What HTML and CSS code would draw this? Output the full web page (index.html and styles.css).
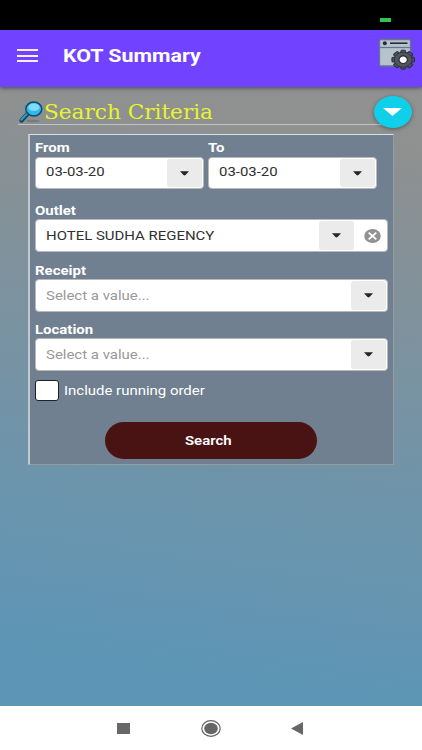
FILE: index.html
```
<!DOCTYPE html>
<html lang="en">
<head>
  <meta charset="UTF-8" />
  <meta name="viewport" content="width=device-width, initial-scale=1.0"/>
  <title>KOT Summary</title>
  <link rel="stylesheet" href="styles.css">
</head>
<body>
  <!-- Status bar -->
  <div class="status-bar"><div class="battery"></div></div>

  <!-- App header -->
  <header class="app-header">
    <button class="menu-btn" aria-label="Menu">
      <span class="bar"></span>
      <span class="bar"></span>
      <span class="bar"></span>
    </button>
    <h1><span class="wide">KOT Summary</span></h1>
    <svg class="settings-icon" width="38" height="32" viewBox="0 0 38 32">
      <rect x="1.5" y="1.5" width="31" height="26.5" rx="1.5" fill="#b5c3cc" stroke="#66758a" stroke-width="1.3"/>
      <path d="M2 9.5H32" stroke="#66758a" stroke-width="1.2"/>
      <circle cx="6.8" cy="5.2" r="2" fill="#262c3b"/>
      <path d="M12 5.2H29.5" stroke="#262c3b" stroke-width="1.6"/>
      <g transform="translate(25.2 21.7)">
        <g fill="#50555f" stroke="#2b303c" stroke-width="1">
          <rect x="-2.4" y="-9.5" width="4.8" height="19" rx="1"/>
          <rect x="-2.4" y="-9.5" width="4.8" height="19" rx="1" transform="scale(1.18 1) rotate(45)"/>
          <rect x="-2.4" y="-9.5" width="4.8" height="19" rx="1" transform="scale(1.18 1) rotate(90)"/>
          <rect x="-2.4" y="-9.5" width="4.8" height="19" rx="1" transform="scale(1.18 1) rotate(135)"/>
          <ellipse rx="8.8" ry="7.5"/>
        </g>
        <ellipse rx="8.3" ry="7" fill="#50555f"/>
        <ellipse rx="4.2" ry="3.8" fill="#fff" stroke="#252a36" stroke-width="1.2"/>
      </g>
    </svg>
  </header>

  <main class="page">
    <div class="section-title">
      <svg class="search-icon" width="26" height="23" viewBox="0 0 26 23">
        <ellipse cx="15" cy="20" rx="7" ry="1.3" fill="#555" opacity=".35"/>
        <path d="M9.5 13L3.5 19.5" stroke="#10465f" stroke-width="4.4" stroke-linecap="round"/>
        <path d="M8.8 13L3.3 18.7" stroke="#269fd0" stroke-width="2" stroke-linecap="round"/>
        <ellipse cx="15.8" cy="8" rx="8" ry="6.9" fill="#31b8ea" stroke="#124c67" stroke-width="1.5"/>
        <ellipse cx="16" cy="6.3" rx="5.5" ry="3.8" fill="#9be7fb" opacity=".75"/>
      </svg>
      <h2><span class="wide">Search Criteria</span></h2>
      <button class="collapse-btn" aria-label="Collapse">
        <svg width="19" height="8" viewBox="0 0 19 8"><path d="M0 0H19L9.5 8Z" fill="#fff"/></svg>
      </button>
    </div>

    <form class="criteria">
      <div class="row">
        <div class="field">
          <label><span class="wide">From</span></label>
          <div class="combo combo-date">
            <span class="value"><span class="wide">03-03-20</span></span>
            <span class="trigger"><svg width="9" height="5" viewBox="0 0 9 5"><path d="M0 .3H9L5.5 4Q4.5 4.8 3.5 4Z"/></svg></span>
          </div>
        </div>
        <div class="field">
          <label><span class="wide">To</span></label>
          <div class="combo combo-date">
            <span class="value"><span class="wide">03-03-20</span></span>
            <span class="trigger"><svg width="9" height="5" viewBox="0 0 9 5"><path d="M0 .3H9L5.5 4Q4.5 4.8 3.5 4Z"/></svg></span>
          </div>
        </div>
      </div>

      <div class="field">
        <label><span class="wide">Outlet</span></label>
        <div class="combo">
          <span class="value"><span class="wide">HOTEL SUDHA REGENCY</span></span>
          <span class="trigger"><svg width="9" height="5" viewBox="0 0 9 5"><path d="M0 .3H9L5.5 4Q4.5 4.8 3.5 4Z"/></svg></span>
          <span class="clear">
            <svg width="17" height="14" viewBox="0 0 17 14">
              <ellipse cx="8.5" cy="7" rx="8.3" ry="7" fill="#929292"/>
              <path d="M4.7 3.6L12.3 10.4M12.3 3.6L4.7 10.4" stroke="#fff" stroke-width="1.8"/>
            </svg>
          </span>
        </div>
      </div>

      <div class="field">
        <label><span class="wide">Receipt</span></label>
        <div class="combo">
          <span class="value placeholder"><span class="wide">Select a value...</span></span>
          <span class="trigger"><svg width="9" height="5" viewBox="0 0 9 5"><path d="M0 .3H9L5.5 4Q4.5 4.8 3.5 4Z"/></svg></span>
        </div>
      </div>

      <div class="field">
        <label><span class="wide">Location</span></label>
        <div class="combo">
          <span class="value placeholder"><span class="wide">Select a value...</span></span>
          <span class="trigger"><svg width="9" height="5" viewBox="0 0 9 5"><path d="M0 .3H9L5.5 4Q4.5 4.8 3.5 4Z"/></svg></span>
        </div>
      </div>

      <div class="check-row">
        <span class="checkbox"></span>
        <span class="wide">Include running order</span>
      </div>

      <button type="button" class="search-btn"><span class="wide">Search</span></button>
    </form>
  </main>

  <!-- Android navigation -->
  <nav class="nav-bar">
    <svg width="13" height="11" viewBox="0 0 13 11"><rect width="13" height="11" fill="#686868"/></svg>
    <svg width="20" height="17" viewBox="0 0 20 17">
      <ellipse cx="10" cy="8.5" rx="9.2" ry="7.8" fill="none" stroke="#666" stroke-width="1.2"/>
      <ellipse cx="10" cy="8.5" rx="6.8" ry="5.8" fill="#666"/>
    </svg>
    <svg width="12" height="13" viewBox="0 0 12 13"><path d="M12 0V13L0 6.5Z" fill="#666"/></svg>
  </nav>
</body>
</html>
```
FILE: styles.css
```
:root {
  --header-color: #7142ff;
  --panel-color: #708090;
  --button-color: #4a1313;
}

* {
  box-sizing: border-box;
}

body {
  font-family: Roboto, "Liberation Sans", sans-serif;
  font-size: 13px;
  margin: 0;
  height: 100vh;
  overflow: hidden;
  display: flex;
  flex-direction: column;
}

svg {
  display: block;
  flex: none;
}

button {
  border: none;
  padding: 0;
  font-family: inherit;
}

/* Extended lettering */
.wide {
  display: inline-block;
  white-space: nowrap;
  transform: scaleX(1.15);
  transform-origin: left center;
}

/* Status bar */
.status-bar {
  height: 30px;
  flex: none;
  background: #000;
  display: flex;
  justify-content: flex-end;
  padding: 18px 31px 0 0;
}

.battery {
  width: 11px;
  height: 4px;
  background: #34c257;
}

/* Header */
.app-header {
  height: 57px;
  flex: none;
  background: var(--header-color);
  box-shadow: 0 1px 4px rgba(0, 0, 0, 0.5);
  display: flex;
  align-items: flex-start;
  padding: 0 6px 0 17px;
  z-index: 1;
}

.menu-btn {
  width: 21px;
  margin-top: 19px;
  background: none;
  display: flex;
  flex-direction: column;
  gap: 3px;
}

.bar {
  height: 2px;
  width: 100%;
  background: #f4eeff;
}

.bar + .bar {
  margin-top: 0.5px;
}

h1 {
  flex: 1;
  margin: 0 0 0 24.5px;
  color: #fff;
  font-size: 19px;
  line-height: 51px;
  font-weight: 700;
}

h1 .wide {
  transform: scaleX(1.125);
}

.settings-icon {
  margin-top: 8px;
}

/* Page */
.page {
  flex: 1;
  min-height: 0;
  padding: 8px 9px 0 18px;
  background: linear-gradient(188deg, #919191 0%, #8f9090 10%, #6e94aa 62%, #5d95b6 92%, #5d95b6 100%);
}

.section-title {
  height: 30px;
  display: flex;
  align-items: flex-start;
  border-bottom: 1px solid #c2c3c4;
  margin-right: 18px;
}

.search-icon {
  margin-top: 6px;
}

h2 {
  flex: 1;
  margin: 0;
  color: #e8f42c;
  font-family: "DejaVu Serif", serif;
  font-size: 20px;
  line-height: 34px;
  font-weight: 400;
}

h2 .wide {
  transform: scaleX(1.08);
}

.collapse-btn {
  width: 38px;
  height: 32px;
  flex: none;
  margin: 1px -16.5px 0 0;
  border-radius: 50%;
  background: #10cfe8;
  box-shadow: 0 1px 4px rgba(0, 0, 0, 0.4);
  display: flex;
  align-items: center;
  justify-content: center;
}

/* Search form */
.criteria {
  width: 366px;
  height: 331px;
  margin: 9px 0 0 10px;
  padding: 4px 5px 0;
  background: var(--panel-color);
  border: 1px solid #969da1;
  border-top-color: #d9e0e5;
  border-left: 2px solid #c2c9ce;
}

.row {
  display: flex;
  gap: 4px;
  margin-bottom: 12px;
}

.field {
  margin-bottom: 8.5px;
}

.row .field {
  margin-bottom: 0;
}

label {
  display: block;
  height: 18px;
  line-height: 19px;
  font-weight: 700;
  color: #fff;
}

.row label {
  line-height: 17px;
}

.combo {
  width: 353px;
  height: 33px;
  padding: 1px;
  display: flex;
  background: #fff;
  border: 1px solid #b9b9bd;
  border-radius: 4px;
}

.combo-date {
  width: 169px;
  height: 32px;
}

.value {
  flex: 1;
  padding-left: 8.5px;
  line-height: 29px;
  color: #303030;
}

.combo-date .value {
  line-height: 26px;
}

.placeholder {
  color: #999;
}

.trigger {
  width: 35px;
  background: #ebebeb;
  border-radius: 3px;
  display: flex;
  align-items: center;
  justify-content: center;
  fill: #252525;
}

.clear {
  width: 32.5px;
  padding-left: 5px;
  display: flex;
  align-items: center;
  justify-content: center;
}

.check-row {
  display: flex;
  align-items: center;
  gap: 5px;
  margin-top: 9px;
  color: #fff;
}

.checkbox {
  width: 24px;
  height: 21px;
  background: #fff;
  border: 1px solid #1d2026;
  border-radius: 3px;
}

.search-btn {
  display: block;
  width: 212px;
  height: 37px;
  margin: 21px 0 0 70px;
  border-radius: 19px;
  background: var(--button-color);
  color: #fff;
  font-size: 13px;
  font-weight: 600;
}

.search-btn .wide {
  transform-origin: center;
  margin-right: 5px;
}

/* Bottom navigation */
.nav-bar {
  height: 44px;
  flex: none;
  background: #fff;
  display: flex;
  align-items: center;
  justify-content: space-between;
  padding: 0 119px 0 117px;
}
```
